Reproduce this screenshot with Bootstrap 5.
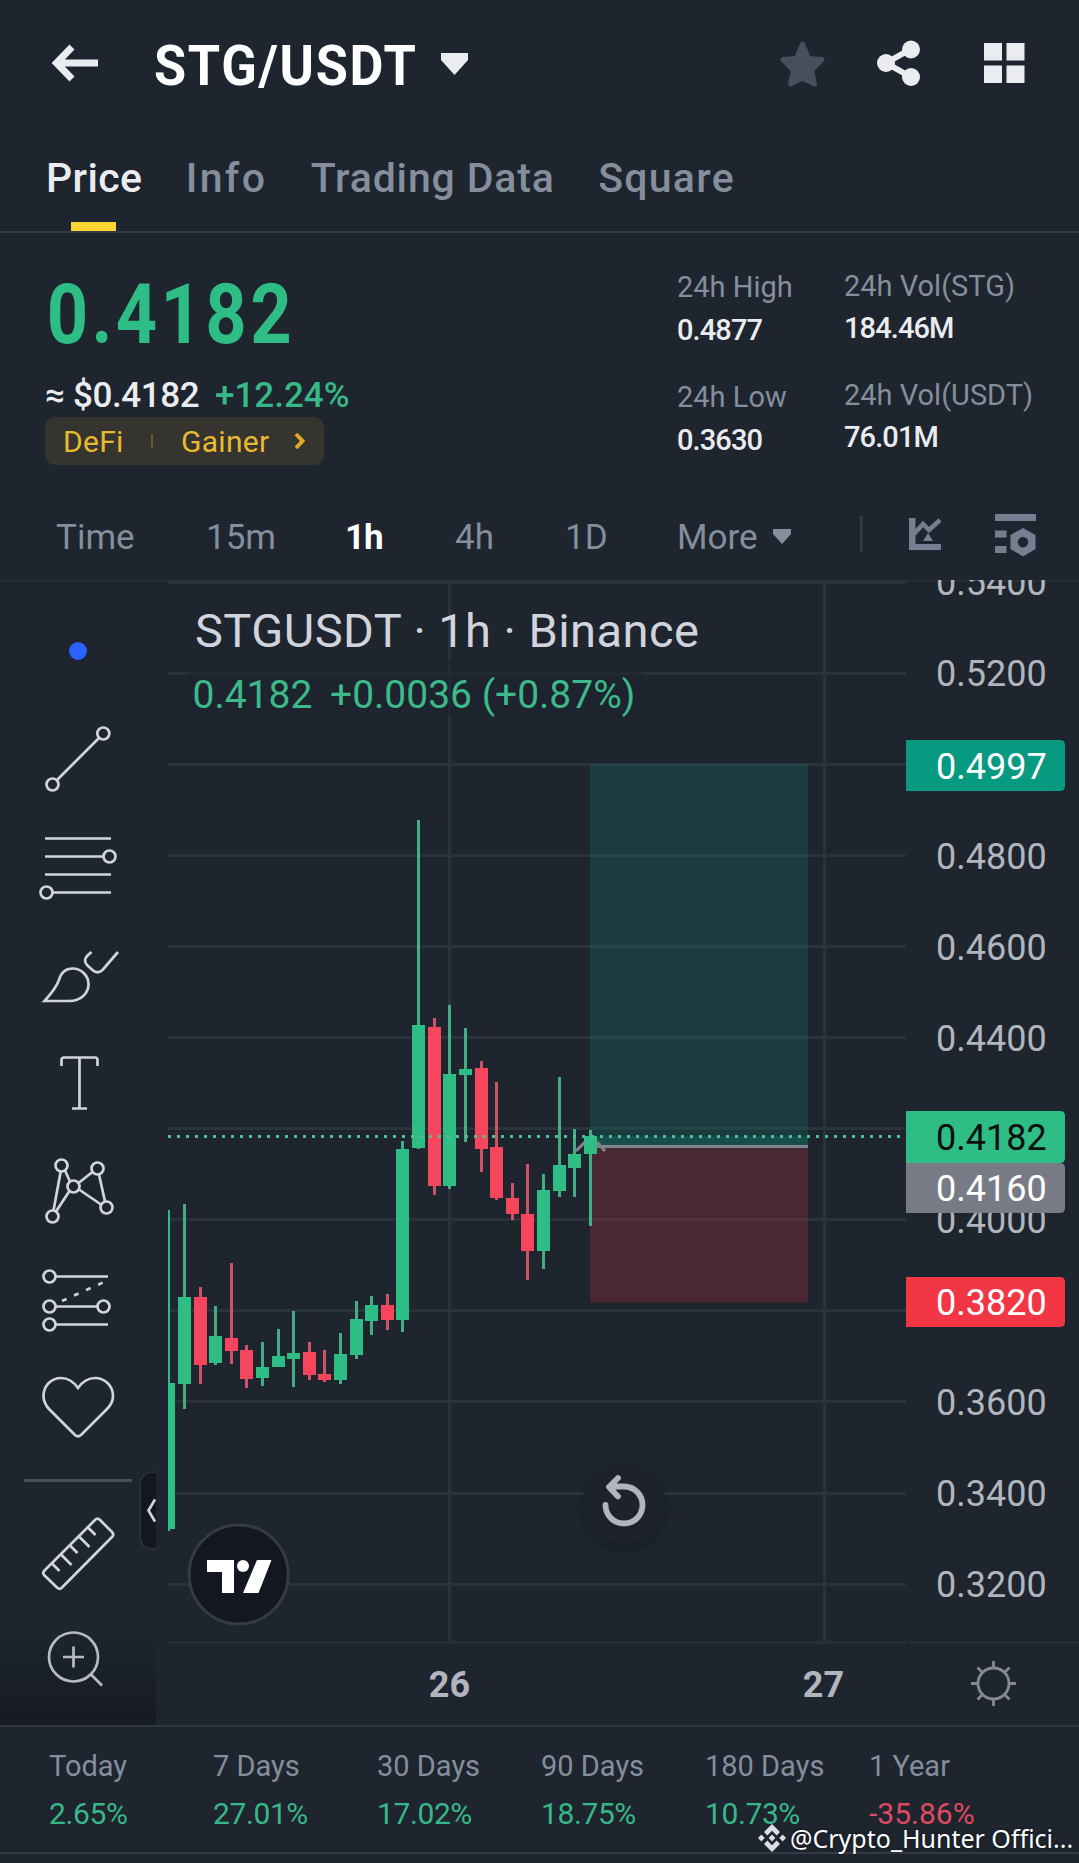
<!DOCTYPE html>
<html lang="en">
<head>
<meta charset="utf-8">
<meta name="viewport" content="width=device-width, initial-scale=1">
<title>STG/USDT</title>
<link href="https://cdn.jsdelivr.net/npm/bootstrap@5.3.0/dist/css/bootstrap.min.css" rel="stylesheet">
<style>
  :root { --ink:#eaecef; --muted:#848e9c; --up:#2ebd85; --down:#f6465d; --bg:#1e252f; --rule:#333a45; }
  body { background:var(--bg); color:var(--ink); font-family:Roboto,sans-serif; width:1079px; height:1863px; overflow:hidden; }
  svg { display:block; flex:none; }
  .topbar { height:126px; padding-left:50px; padding-right:51px; }
  .pair { font-size:55px; font-weight:700; line-height:60px; color:#fff; letter-spacing:1.78px; margin-left:54px; padding-top:5px; transform:scaleX(.95); transform-origin:left; }
  .pagetabs { height:107px; border-bottom:2px solid var(--rule); padding-left:46px; gap:43.500px; }
  .pagetabs .nav-link { padding:0; height:105px; line-height:105px; font-size:41px; font-weight:500; color:var(--muted); position:relative; }
  .pagetabs .nav-link.active { color:var(--ink); letter-spacing:.37px; }
  .pagetabs .nav-link.active::after { content:""; position:absolute; left:25px; bottom:0; width:45px; height:9px; background:#fcd535; }
  .overview { height:261px; padding-left:45px; }
  .quote { width:632px; padding-top:40px; }
  .last { font-size:83px; line-height:84px; font-weight:700; letter-spacing:3.85px; color:var(--up); transform:scaleX(.87); transform-origin:left; padding-left:2px; }
  .approx { font-size:35px; line-height:40px; font-weight:500; margin-top:19px; }
  .taglist { margin-top:1px; width:279px; height:48px; border-radius:10px; background:#35342e; color:#e9b92f; font-size:30px; line-height:48px; padding-left:18px; }
  .taglist span { padding-top:2px; line-height:46px; letter-spacing:.3px; }
  .stat { color:var(--muted); font-size:29px; line-height:43px; white-space:nowrap; }
  .stat b { display:block; color:var(--ink); font-weight:500; letter-spacing:-.9px; }
  .intervals { height:86px; padding-left:56px; padding-top:2px; font-size:35px; line-height:84px; color:var(--muted); }
  .intervals span { flex:none; }
  .chartrow { height:1145px; }
  .tools { width:156px; border-top:2px solid #272d37; position:relative; background:linear-gradient(to bottom, rgba(19,23,34,0) 92%, #161a25 100%); }
  .tools svg { fill:none; stroke:#d1d4dc; stroke-width:2.7; }
  .tools hr { margin:19px 24px 18px; border:0; border-top:3px solid #4a4e59; opacity:1; }
  .fold { position:absolute; right:0; top:889px; width:17px; height:79px; border:2px solid #2a2e39; border-right:0; border-radius:13px 0 0 13px; background:#131722; }
  .returns { height:129px; border-top:2px solid #2f363f; border-bottom:2px solid #343b46; padding:15px 0 0 49px; }
  .returns .cell { width:164px; font-size:29px; line-height:48px; color:var(--muted); white-space:nowrap; flex:none; }
  .returns .cell div { font-size:30px; letter-spacing:-.4px; color:#37b887; }
  .returns .cell.loss div { color:#de4a60; letter-spacing:0; }
  .wmark { position:absolute; left:758px; top:1821px; font:25px/34px 'Noto Sans',sans-serif; color:#fff; white-space:nowrap; text-shadow:0 0 3px #0008; gap:4px; }
</style>
</head>
<body class="d-flex flex-column m-0">
<header class="topbar d-flex align-items-center">
  <svg width="50" height="48" viewBox="50 39 50 48" fill="none" stroke="#eaecef" stroke-width="7"><path d="M98 63H58M72 47L56.5 63L72 79"/></svg>
  <h1 class="pair mb-0">STG/USDT</h1>
  <svg style="margin-left:8px" width="30" height="24" viewBox="439 51 30 24" fill="#eaecef"><path d="M440 53h27v7l-13.500 15L440 60z"/></svg>
  <div class="d-flex align-items-center ms-auto">
    <svg width="48" height="50" viewBox="780 38 48 50"><path d="M803.500 44l6 14.500 13.500 1-10.500 11 3 13.500-12-6-12 6 3-13.500-10.500-11 13.500-1z" fill="#474f5e" stroke="#474f5e" stroke-width="5" stroke-linejoin="round"/></svg>
    <svg style="margin-left:48px" width="48" height="50" viewBox="876 38 48 50" fill="#eaecef"><path d="M912 49L887 63L912 77" fill="none" stroke="#eaecef" stroke-width="6"/><circle cx="912" cy="49.500" r="9"/><circle cx="887" cy="63" r="9"/><circle cx="912" cy="77" r="9"/></svg>
    <svg style="margin-left:60px" width="45" height="46" viewBox="984 40 45 46" fill="#eaecef"><path d="M985 43h18v17.500h-18zM1007.500 43h18v17.500h-18zM985 65.500h18v17.500h-18zM1007.500 65.500h18v17.500h-18z"/></svg>
  </div>
</header>

<nav class="pagetabs nav flex-nowrap">
  <a class="nav-link active">Price</a>
  <a class="nav-link" style="letter-spacing:2.3px">Info</a>
  <a class="nav-link" style="letter-spacing:.84px">Trading Data</a>
  <a class="nav-link" style="letter-spacing:1.3px">Square</a>
</nav>

<section class="overview d-flex">
  <div class="quote">
    <div class="last">0.4182</div>
    <div class="approx d-flex"><span style="width:28px">≈</span><span style="width:142px;letter-spacing:-.4px">$0.4182</span><span style="color:#37b887">+12.24%</span></div>
    <div class="taglist d-flex align-items-center">
      <span style="width:88px">DeFi</span><i style="width:2px;height:14px;background:#6a5a2c;margin-right:28px"></i><span style="width:113px">Gainer</span>
      <svg width="12" height="18" viewBox="0 0 12 18" fill="none" stroke="#e0aa22" stroke-width="4"><path d="M2 2l6.500 7L2 16"/></svg>
    </div>
  </div>
  <div class="d-flex flex-column gap-4" style="width:167px;padding-top:33px">
    <div class="stat">24h High<b>0.4877</b></div>
    <div class="stat">24h Low<b>0.3630</b></div>
  </div>
  <div class="d-flex flex-column" style="padding-top:32px;gap:25px">
    <div class="stat" style="line-height:42px">24h Vol(STG)<b>184.46M</b></div>
    <div class="stat" style="line-height:42px">24h Vol(USDT)<b>76.01M</b></div>
  </div>
</section>

<nav class="intervals d-flex align-items-center">
  <span style="width:150px">Time</span><span style="width:139px">15m</span><span class="fw-bold text-white" style="width:110px;letter-spacing:-1px">1h</span><span style="width:110px">4h</span><span style="width:112px">1D</span><span style="width:95px">More</span>
  <svg style="margin-top:-5px" width="20" height="16" viewBox="772 526 20 16" fill="#848e9c"><path d="M773 527h18v5l-9 10-9-10z"/></svg>
  <svg style="margin-left:67px;margin-top:2px" width="220" height="60" viewBox="859 509 220 60" fill="#767f92">
    <path d="M860 516h2.500v36h-2.500z" fill="#353c47"/>
    <path d="M909 518h6.500v26h25.500v6h-32z"/><path d="M914 534l9-10 6 6 11-10" fill="none" stroke="#767f92" stroke-width="4.500"/><path d="M928 533l5 8h-10z"/>
    <path d="M995 514h41v7h-41zM995 530.500h11.500v7H995zM995 546h11.500v7H995z"/>
    <path fill-rule="evenodd" d="M1023 528l12.500 7v14l-12.500 7.500-12.500-7.500v-14zM1023 537a5.200 5.200 0 1 0 .01 0z"/>
  </svg>
</nav>

<main class="chartrow d-flex">
  <aside class="tools">
    <svg width="156" height="123" viewBox="0 582 156 123"><circle cx="78" cy="651" r="9" fill="#2962ff" stroke="none"/></svg>
    <svg width="156" height="107" viewBox="0 705 156 107"><circle cx="103.300" cy="733.500" r="6"/><circle cx="52.500" cy="784.500" r="6"/><path d="M57 780L99 738"/></svg>
    <svg width="156" height="108" viewBox="0 812 156 108"><path d="M45 838.500h66M45 856.500h58M45 874.500h66M53 892.500h58"/><circle cx="109.500" cy="856.500" r="6"/><circle cx="46.500" cy="892.500" r="6"/></svg>
    <svg width="156" height="110" viewBox="0 920 156 110"><path d="M91.500 952l-4 3.500q-5 5 0 10l5 4.500q5 4.500 10 0L118 952"/><path d="M44.500 1001H69C81 1001 88.500 993 88.500 984.500C88.500 975 81 968.500 72.500 968.500C65 968.500 61 972.500 59 980C56 988 50 995 44.500 1001z"/></svg>
    <svg width="156" height="107" viewBox="0 1030 156 107"><path d="M61.500 1066v-6q0-2.500 2.500-2.500h31q2.500 0 2.500 2.500v6M79.500 1057.500v51M72 1108.500h15"/></svg>
    <svg width="156" height="108" viewBox="0 1137 156 108"><circle cx="61.500" cy="1165.500" r="6"/><circle cx="97.500" cy="1168.500" r="6"/><circle cx="73.500" cy="1186.500" r="6"/><circle cx="52.500" cy="1216.500" r="6"/><circle cx="106.500" cy="1207.500" r="6"/><path d="M60.700 1171.500L53.500 1210.500M65 1170.500L70 1181.500M78.500 1183L92.500 1172M99 1174.500L105 1201.500M79 1189.500L101 1204.500M69.500 1191L56 1211.500"/></svg>
    <svg width="156" height="109" viewBox="0 1245 156 109"><circle cx="49.500" cy="1276.500" r="6"/><circle cx="49.500" cy="1306.500" r="6"/><circle cx="103.500" cy="1306.500" r="6"/><circle cx="49.500" cy="1324.500" r="6"/><path d="M56 1276.500h52M56 1306.500h41M56 1324.500h52"/><path d="M62 1301L104 1282" stroke-dasharray="5 8.200"/></svg>
    <svg width="156" height="106" viewBox="0 1354 156 106"><path d="M78 1388C73 1381 67 1378 61 1378C51 1378 43.500 1386 43.500 1396C43.500 1401 45.500 1405 49 1409L75 1435Q78 1437.500 81 1435L107 1409C111 1405 113 1401 113 1396C113 1386 105 1378 95 1378C89 1378 83 1381 78 1388z"/></svg>
    <hr>
    <svg width="156" height="107" viewBox="0 1500 156 107"><path d="M95 1520q2.500-2.500 5 0l12 12q2.500 2.500 0 5L62 1587.500q-2.500 2.500-5 0l-12.500-12q-2.500-2.500 0-5zM52.500 1564l7 7M61.500 1555l10 10M70.500 1546l7 7M79.500 1537l10 10M88.500 1528l7 7"/></svg>
    <svg width="156" height="118" viewBox="0 1607 156 118" style="stroke:#b7bac3"><circle cx="73.500" cy="1657" r="24.500"/><path d="M63 1657h21M73.500 1646.500v21M91 1674.500l11 11"/></svg>
    <div class="fold"><svg width="15" height="75" viewBox="0 0 15 75"><path d="M14 26.500L7.500 37.500l6.500 11"/></svg></div>
  </aside>

  <svg id="chart" width="923" height="1145" viewBox="156 580 923 1145" font-family="Roboto,sans-serif">
    <g id="grid" stroke="#2a323b" stroke-width="3">
      <path d="M156 581h923" stroke="#272d37" stroke-width="2"/>
      <path d="M449.500 580V1641M824.500 580V1641"/>
      <path d="M168 1642.500H906M910 1642.500H1079" stroke-width="2"/>
    </g>
    <rect x="590" y="764" width="218" height="382" fill="#089981" fill-opacity=".2"/>
    <rect x="590" y="1136.500" width="218" height="9.500" fill="#089981" fill-opacity=".2"/>
    <rect x="590" y="1146" width="218" height="156.500" fill="#f23645" fill-opacity=".2"/>
    <path d="M590 1146.500h218M576 1151l11-11M597 1142l8 9" stroke="#81858f" stroke-width="3" fill="none"/>
    <g id="candles"></g>
    <path d="M168 1136.500H906" stroke="#4cc293" stroke-width="3" stroke-dasharray="3 6"/>
    <rect x="186" y="660" width="456" height="56" fill="#1e252f" fill-opacity=".6"/>
    <text x="195" y="646.500" font-size="47" letter-spacing=".46" fill="#d1d4dc">STGUSDT · 1h · Binance</text>
    <text x="192.500" y="708" font-size="39" fill="#3cba89">0.4182</text>
    <text x="330" y="708" font-size="39" fill="#3cba89">+0.0036 (+0.87%)</text>
    <g id="axis" font-size="36" fill="#b2b5be"></g>
    <g font-size="36" font-weight="700" fill="#b2b5be" text-anchor="middle"><text x="449.500" y="1697">26</text><text x="823.500" y="1697">27</text></g>
    <g fill="none" stroke="#868993" stroke-width="2.800"><circle cx="993.500" cy="1683.500" r="15.500"/><path d="M993.500 1661v7M993.500 1699v7M971 1683.500h7M1009 1683.500h7M977.500 1667.500l5 5M1004.500 1694.500l5 5M977.500 1699.500l5-5M1004.500 1672.500l5-5"/></g>
    <defs><filter id="soft" x="-50%" y="-50%" width="200%" height="200%"><feGaussianBlur stdDeviation="5"/></filter></defs>
    <circle cx="624" cy="1508" r="39" fill="#141823" fill-opacity=".8" filter="url(#soft)"/>
    <circle cx="624" cy="1504" r="41" fill="#1e222d"/>
    <path d="M605.500 1505A18.500 18.500 0 1 0 624 1486.500H610.500M618 1478L609 1487L618 1496.500" fill="none" stroke="#b2b5be" stroke-width="5.800" stroke-linecap="round" stroke-linejoin="round"/>
    <circle cx="238.700" cy="1574.500" r="49.500" fill="#131722" stroke="#363a45" stroke-width="3"/>
    <path d="M207 1560h27v33h-12v-21h-15zM257 1560h14.500l-13 33h-15.500z" fill="#fff"/><circle cx="243" cy="1566" r="6" fill="#fff"/>
  </svg>
</main>

<section class="returns d-flex">
  <div class="cell">Today<div>2.65%</div></div>
  <div class="cell">7 Days<div>27.01%</div></div>
  <div class="cell">30 Days<div>17.02%</div></div>
  <div class="cell">90 Days<div>18.75%</div></div>
  <div class="cell">180 Days<div>10.73%</div></div>
  <div class="cell loss">1 Year<div>-35.86%</div></div>
</section>

<div class="wmark d-flex align-items-center">
  <svg width="28" height="28" viewBox="0 0 28 28" fill="#dcdee1"><path d="M14 0l8 8-3.400 3.400L14 6.800l-4.600 4.600L6 8zM14 28l8-8-3.400-3.400L14 21.200l-4.600-4.600L6 20zM3.400 10.600L6.800 14l-3.400 3.400L0 14zM24.600 10.600L28 14l-3.400 3.400-3.400-3.400zM14 10.600l3.400 3.400-3.400 3.400-3.400-3.400z"/></svg>
  <span>@Crypto_Hunter Offici...</span>
</div>

<script src="https://cdn.jsdelivr.net/npm/bootstrap@5.3.0/dist/js/bootstrap.bundle.min.js"></script>
<script>
  // [centre x, wick top, body top, body bottom, wick bottom, rising]
  const bars = [
    [184.5,1204,1297,1384,1409,1],[200.5,1287,1297,1365,1384,0],[215.5,1306,1336,1363,1365,1],[231.5,1263,1338,1351,1364,0],
    [246.5,1345,1350,1379,1388,0],[262.5,1342,1367,1378,1386,1],[278.5,1329,1356,1367,1367,1],[293.5,1311,1353,1359,1387,1],
    [309.5,1342,1352,1375,1380,0],[324.5,1350,1374,1380,1382,0],[340.5,1333,1354,1380,1384,1],[356.5,1301,1319,1355,1359,1],
    [371.5,1296,1305,1321,1335,1],[387.5,1294,1305,1320,1330,0],[402.5,1141,1149,1320,1332,1],[418.5,820,1025,1148,1149,1],
    [434.5,1018,1027,1186,1195,0],[449.5,1005,1074,1186,1189,1],[465.5,1028,1069,1075,1142,1],[481.5,1061,1068,1149,1172,0],
    [496.5,1082,1147,1198,1200,0],[512.5,1183,1198,1214,1220,0],[527.5,1164,1214,1251,1280,0],[543.5,1174,1190,1251,1269,1],
    [559.5,1077,1165,1191,1197,1],[574.5,1129,1154,1168,1197,1],[590.5,1130,1136,1154,1226,1]
  ];
  let c = '<path d="M168 1210h2v173h5v146h-5v2h-2z" fill="#2ebd85"/>';
  for (const [x,h,t,b,l,up] of bars)
    c += `<rect x="${x-1.5}" y="${h}" width="3" height="${l-h}" fill="${up?'#45ad84':'#cf5266'}"/><rect x="${x-6.5}" y="${t}" width="13" height="${b-t}" fill="${up?'#2ebd85':'#f6465d'}"/>`;
  document.getElementById('candles').innerHTML = c;

  // Horizontal grid every 0.02 from 0.54 down to 0.32
  let g = '';
  for (let i = 0; i < 12; i++) { const y = Math.round(582 + i*91.05) + .5; g += `<path d="M168 ${y}H906"/>`; }
  document.getElementById('grid').innerHTML += g;

  let a = '';
  for (const [i,v] of [[0,'0.5400'],[1,'0.5200'],[3,'0.4800'],[4,'0.4600'],[5,'0.4400'],[7,'0.4000'],[9,'0.3600'],[10,'0.3400'],[11,'0.3200']])
    a += `<text x="936" y="${595.3 + i*91.1}">${v}</text>`;
  for (const [y,h,v,bg,fg] of [[740,51,'0.4997','#089981','#fff'],[1163,50,'0.4160','#787b86','#fff'],[1111,52,'0.4182','#2ebd85','#0c0e12'],[1277,50,'0.3820','#f23645','#fff']])
    a += `<path d="M906 ${y}h154q5 0 5 5v${h-10}q0 5-5 5h-154z" fill="${bg}"/><text x="936" y="${y+h/2+13}" fill="${fg}">${v}</text>`;
  document.getElementById('axis').innerHTML = a;
</script>
</body>
</html>
